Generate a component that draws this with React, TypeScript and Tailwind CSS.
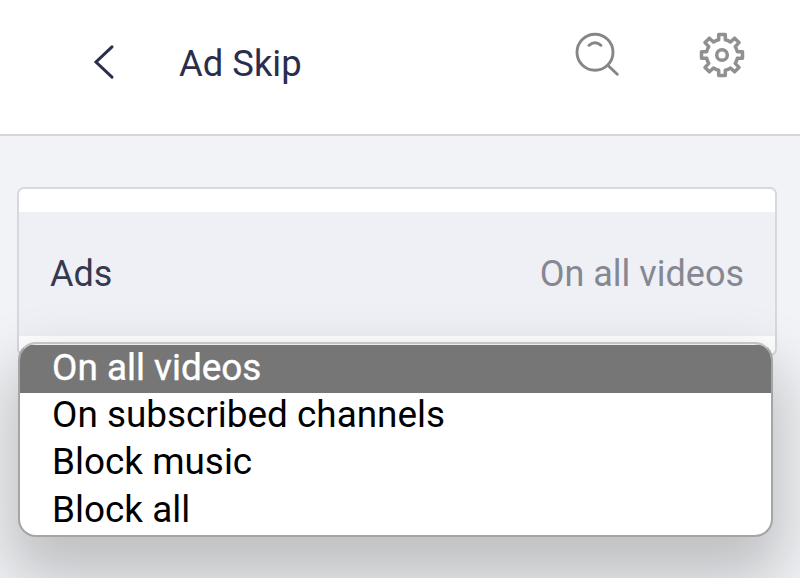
import React from "react";

const options = ["On all videos", "On subscribed channels", "Block music", "Block all"];

function BackIcon() {
  return (
    <svg className="ml-[90px] mt-[42px] h-10 w-7 shrink-0" viewBox="0 0 28 40" fill="none" stroke="#2b2d4d" strokeWidth="3" strokeLinecap="round">
      <path d="M22 4.8 6 20l16 15.2" strokeLinejoin="miter" />
    </svg>
  );
}

function SearchIcon() {
  return (
    <svg className="mt-7 h-[52px] w-[52px] shrink-0" viewBox="0 0 52 52" fill="none" stroke="#868688" strokeWidth="2.9" strokeLinecap="round">
      <circle cx="25" cy="24.3" r="18" />
      <path d="M38 37.5 47.3 46.2M19 17.3q6-5 12 0" />
    </svg>
  );
}

function GearIcon() {
  return (
    <svg className="h-[52px] w-[52px] shrink-0" viewBox="-26 -26 52 52" fill="none" stroke="#909092" strokeWidth="3.5" strokeLinejoin="round">
      <path d="M-3.3-20.4H3.3V-15.2Q6.2-14.6 8.5-13L12.6-16.8 17-12.4 13.2-8.4Q14.7-6 15.3-3.3H20.5V3.3H15.3Q14.7 6 13.2 8.4L17 12.4 12.6 16.8 8.5 13Q6.2 14.6 3.3 15.2V20.4H-3.3V15.2Q-6.2 14.6-8.5 13L-12.6 16.8-17 12.4-13.2 8.4Q-14.7 6-15.3 3.3H-20.5V-3.3H-15.3Q-14.7-6-13.2-8.4L-17-12.4-12.6-16.8-8.5-13Q-6.2-14.6-3.3-15.2Z" />
      <circle r="5.3" />
    </svg>
  );
}

export default function App() {
  return (
    <main className="h-[578px] w-full overflow-hidden bg-[#f2f3f6] font-['Roboto',sans-serif] text-[36px]">
      <header className="flex h-[136px] items-start border-b-2 border-[#d4d4da] bg-white text-[#2b2d4d]">
        <BackIcon />
        <h1 className="ml-[61px] mt-[42px] w-[391px] text-[36.4px] leading-[43px]">Ad Skip</h1>
        <SearchIcon />
        <div className="ml-[73.5px] mt-[29px]">
          <GearIcon />
        </div>
      </header>
      <section className="relative ml-[17px] mt-[51px] h-[169px] w-[760px] rounded-[7px] border-2 border-[#d6d8df] bg-white pt-[23px]">
        <div className="flex h-[124px] items-center justify-between bg-[#eff0f5] px-[31px] leading-[41px]">
          <span className="text-[#36384f]">Ads</span>
          <span className="text-[#858792]">On all videos</span>
        </div>
        <div className="absolute -left-px top-[153px] w-[755px] rounded-[18px] border-2 border-[#a5a5a7] border-t-[#c4c4c6] bg-white text-[36.9px] text-black shadow-[0_32px_60px_10px_rgba(0,0,0,0.21)]">
          <div className="overflow-hidden rounded-[16px]">
            {options.map((label, i) => (
              <div
                key={label}
                className={
                  i === 0
                    ? "h-[49px] border-t border-[#eeeeee] bg-[#767676] pl-8 leading-[46px] text-white [-webkit-text-stroke:0.4px_white]"
                    : "h-[47.3px] pl-8 leading-[44.2px]"
                }
              >
                {label}
              </div>
            ))}
          </div>
        </div>
      </section>
    </main>
  );
}
